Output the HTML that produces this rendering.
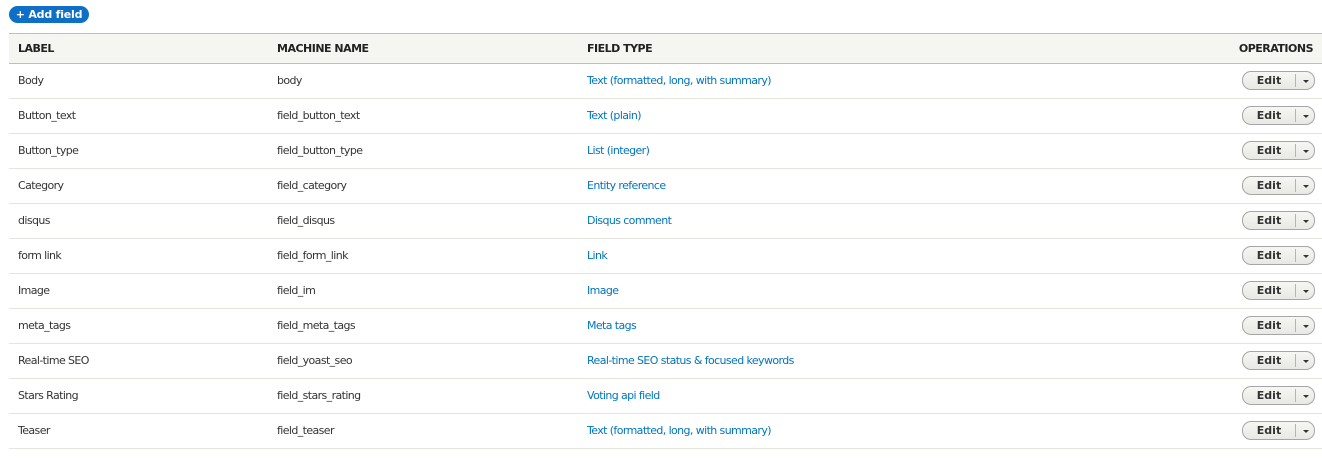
<!DOCTYPE html>
<html><head><style>
body{margin:0;background:#fff;font-family:"DejaVu Sans","Liberation Sans",sans-serif;font-size:11px;color:#333;width:1322px;height:458px;overflow:hidden;position:relative;letter-spacing:-0.6px}
.add{position:absolute;left:9px;top:6px;width:80px;height:17px;background:#0f6fc6;border-radius:9px;color:#fff;font-weight:bold;font-size:11px;line-height:17px;text-align:center;box-sizing:border-box;letter-spacing:-0.2px}
table{position:absolute;left:9px;top:33px;width:1313px;border-collapse:collapse}
th{background:#f5f5f2;height:29px;text-align:left;font-weight:bold;font-size:11px;color:#222;border-top:1px solid #bfbfba;border-bottom:1px solid #bfbfba;padding:0 0 0 9px;letter-spacing:-0.5px}
td{height:34px;padding:0 0 2px 9px;box-sizing:border-box;border-bottom:1px solid #e6e4df}
tr.r td{height:35px}
a{color:#0074bd;text-decoration:none}
.op{text-align:right;padding-right:7px}
.btn{display:inline-block;position:relative;width:71px;height:17px;border:1px solid #a6a6a6;border-radius:9px;background:linear-gradient(#f6f6f3,#e8e8e4);vertical-align:middle;text-align:left}
.btn b{position:absolute;left:0;width:52px;text-align:center;line-height:17px;color:#333;font-size:11px;letter-spacing:0}
.btn i{position:absolute;left:52px;top:2px;height:13px;border-left:1px solid #b5b5b0}
.btn s{position:absolute;left:60px;top:8px;border-left:3px solid transparent;border-right:3px solid transparent;border-top:3px solid #333}
</style></head><body>
<div class="add">+ Add field</div>
<table>
<tr><th style="width:250px">LABEL</th><th style="width:301px">MACHINE NAME</th><th>FIELD TYPE</th><th style="text-align:right;padding-right:9px">OPERATIONS</th></tr>
<tr class="r"><td>Body</td><td>body</td><td><a>Text (formatted, long, with summary)</a></td><td class="op"><span class="btn"><b>Edit</b><i></i><s></s></span></td></tr>
<tr class="r"><td>Button_text</td><td>field_button_text</td><td><a>Text (plain)</a></td><td class="op"><span class="btn"><b>Edit</b><i></i><s></s></span></td></tr>
<tr class="r"><td>Button_type</td><td>field_button_type</td><td><a>List (integer)</a></td><td class="op"><span class="btn"><b>Edit</b><i></i><s></s></span></td></tr>
<tr class="r"><td>Category</td><td>field_category</td><td><a>Entity reference</a></td><td class="op"><span class="btn"><b>Edit</b><i></i><s></s></span></td></tr>
<tr class="r"><td>disqus</td><td>field_disqus</td><td><a>Disqus comment</a></td><td class="op"><span class="btn"><b>Edit</b><i></i><s></s></span></td></tr>
<tr class="r"><td>form link</td><td>field_form_link</td><td><a>Link</a></td><td class="op"><span class="btn"><b>Edit</b><i></i><s></s></span></td></tr>
<tr class="r"><td>Image</td><td>field_im</td><td><a>Image</a></td><td class="op"><span class="btn"><b>Edit</b><i></i><s></s></span></td></tr>
<tr class="r"><td>meta_tags</td><td>field_meta_tags</td><td><a>Meta tags</a></td><td class="op"><span class="btn"><b>Edit</b><i></i><s></s></span></td></tr>
<tr class="r"><td>Real-time SEO</td><td>field_yoast_seo</td><td><a>Real-time SEO status &amp; focused keywords</a></td><td class="op"><span class="btn"><b>Edit</b><i></i><s></s></span></td></tr>
<tr class="r"><td>Stars Rating</td><td>field_stars_rating</td><td><a>Voting api field</a></td><td class="op"><span class="btn"><b>Edit</b><i></i><s></s></span></td></tr>
<tr class="r"><td>Teaser</td><td>field_teaser</td><td><a>Text (formatted, long, with summary)</a></td><td class="op"><span class="btn"><b>Edit</b><i></i><s></s></span></td></tr>
</table>
</body></html>
